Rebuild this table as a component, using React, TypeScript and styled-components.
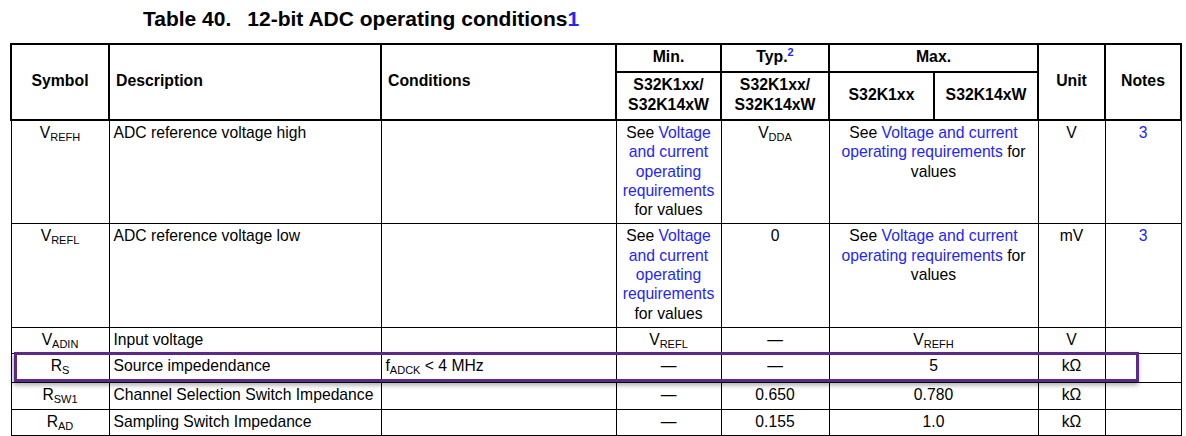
import React from "react";
import styled, { createGlobalStyle } from "styled-components";

const LINK = "#2424ff";

const GlobalStyle = createGlobalStyle`
  html, body {
    margin: 0;
    padding: 0;
    background: #ffffff;
  }
  body {
    font-family: "Liberation Sans", Arial, Helvetica, sans-serif;
    color: #000000;
  }
`;

const SC = {
  Page: styled.div`
    width: 1186px;
    height: 436px;
    overflow: hidden;
    padding-left: 10px;
    box-sizing: border-box;
  `,
  Title: styled.h2`
    margin: 0;
    padding: 7px 0 0 133px;
    height: 43px;
    box-sizing: border-box;
    font-size: 21px;
    line-height: 24px;
    font-weight: 700;
    color: #000;
  `,
  TitleLabel: styled.span`
    margin-right: 16px;
  `,
  Wrap: styled.div`
    position: relative;
    width: 1170px;
  `,
  Table: styled.table`
    width: 1170px;
    table-layout: fixed;
    border-collapse: collapse;
    font-size: 15.7px;
    line-height: 19.3px;
  `,
  HeadRow: styled.tr<{ $h: number }>`
    height: ${({ $h }) => $h}px;
  `,
  Th: styled.th<{ $left?: boolean }>`
    border: 2px solid #000;
    padding: 0 6px 3px;
    font-size: 15.8px;
    font-weight: 700;
    line-height: 20px;
    vertical-align: middle;
    text-align: ${({ $left }) => ($left ? "left" : "center")};
  `,
  BodyRow: styled.tr<{ $tall?: boolean }>`
    height: ${({ $tall }) => ($tall ? 29 : 26)}px;
  `,
  Td: styled.td<{ $center?: boolean }>`
    border: 1px solid #000;
    padding: 2px 4px 4px;
    vertical-align: top;
    text-align: ${({ $center }) => ($center ? "center" : "left")};
  `,
  Sub: styled.span`
    font-size: 11px;
    line-height: 0;
    vertical-align: -3px;
  `,
  Sup: styled.span`
    font-size: 11px;
    font-weight: 700;
    line-height: 0;
    vertical-align: 6px;
    color: ${LINK};
  `,
  Link: styled.span`
    color: ${LINK};
  `,
  Highlight: styled.div`
    position: absolute;
    left: 4px;
    top: 309px;
    width: 1125px;
    height: 30px;
    box-sizing: border-box;
    border: 3px solid #5a2a86;
    box-shadow: -1px 3px 5px rgba(0, 0, 0, 0.35);
    pointer-events: none;
  `,
};

type Row = {
  symbol: React.ReactNode;
  desc: string;
  cond?: React.ReactNode;
  min: React.ReactNode;
  typ: React.ReactNode;
  max: React.ReactNode;
  unit: string;
  notes?: string;
  tall?: boolean;
};

const Sym = ({ base, sub }: { base: string; sub: string }) => (
  <>
    {base}
    <SC.Sub>{sub}</SC.Sub>
  </>
);

const SeeVoltage = () => (
  <>
    See <SC.Link>Voltage and current operating requirements</SC.Link> for
    values
  </>
);

const rows: Row[] = [
  {
    symbol: <Sym base="V" sub="REFH" />,
    desc: "ADC reference voltage high",
    min: <SeeVoltage />,
    typ: <Sym base="V" sub="DDA" />,
    max: <SeeVoltage />,
    unit: "V",
    notes: "3",
  },
  {
    symbol: <Sym base="V" sub="REFL" />,
    desc: "ADC reference voltage low",
    min: <SeeVoltage />,
    typ: "0",
    max: <SeeVoltage />,
    unit: "mV",
    notes: "3",
  },
  {
    symbol: <Sym base="V" sub="ADIN" />,
    desc: "Input voltage",
    min: <Sym base="V" sub="REFL" />,
    typ: "—",
    max: <Sym base="V" sub="REFH" />,
    unit: "V",
  },
  {
    symbol: <Sym base="R" sub="S" />,
    desc: "Source impedendance",
    cond: <Sym base="f" sub="ADCK" />,
    min: "—",
    typ: "—",
    max: "5",
    unit: "kΩ",
    tall: true,
  },
  {
    symbol: <Sym base="R" sub="SW1" />,
    desc: "Channel Selection Switch Impedance",
    min: "—",
    typ: "0.650",
    max: "0.780",
    unit: "kΩ",
  },
  {
    symbol: <Sym base="R" sub="AD" />,
    desc: "Sampling Switch Impedance",
    min: "—",
    typ: "0.155",
    max: "1.0",
    unit: "kΩ",
  },
];

const widths = [98, 272, 235, 105, 108, 105, 104, 67, 76];

const App = () => {
  return (
    <SC.Page>
      <GlobalStyle />
      <SC.Title>
        <SC.TitleLabel>Table 40.</SC.TitleLabel>
        12-bit ADC operating conditions<SC.Link>1</SC.Link>
      </SC.Title>
      <SC.Wrap>
        <SC.Table>
          <colgroup>
            {widths.map((w, i) => (
              <col key={i} style={{ width: w }} />
            ))}
          </colgroup>
          <thead>
            <SC.HeadRow $h={28}>
              <SC.Th rowSpan={2}>Symbol</SC.Th>
              <SC.Th rowSpan={2} $left>
                Description
              </SC.Th>
              <SC.Th rowSpan={2} $left>
                Conditions
              </SC.Th>
              <SC.Th>Min.</SC.Th>
              <SC.Th>
                Typ.<SC.Sup>2</SC.Sup>
              </SC.Th>
              <SC.Th colSpan={2}>Max.</SC.Th>
              <SC.Th rowSpan={2}>Unit</SC.Th>
              <SC.Th rowSpan={2}>Notes</SC.Th>
            </SC.HeadRow>
            <SC.HeadRow $h={48}>
              <SC.Th>
                S32K1xx/
                <br />
                S32K14xW
              </SC.Th>
              <SC.Th>
                S32K1xx/
                <br />
                S32K14xW
              </SC.Th>
              <SC.Th>S32K1xx</SC.Th>
              <SC.Th>S32K14xW</SC.Th>
            </SC.HeadRow>
          </thead>
          <tbody>
            {rows.map((r, i) => (
              <SC.BodyRow key={i} $tall={r.tall}>
                <SC.Td $center>{r.symbol}</SC.Td>
                <SC.Td>{r.desc}</SC.Td>
                <SC.Td>{r.cond && <>{r.cond} &lt; 4 MHz</>}</SC.Td>
                <SC.Td $center>{r.min}</SC.Td>
                <SC.Td $center>{r.typ}</SC.Td>
                <SC.Td $center colSpan={2}>
                  {r.max}
                </SC.Td>
                <SC.Td $center>{r.unit}</SC.Td>
                <SC.Td $center>
                  {r.notes && <SC.Link>{r.notes}</SC.Link>}
                </SC.Td>
              </SC.BodyRow>
            ))}
          </tbody>
        </SC.Table>
        <SC.Highlight />
      </SC.Wrap>
    </SC.Page>
  );
};

export default App;
